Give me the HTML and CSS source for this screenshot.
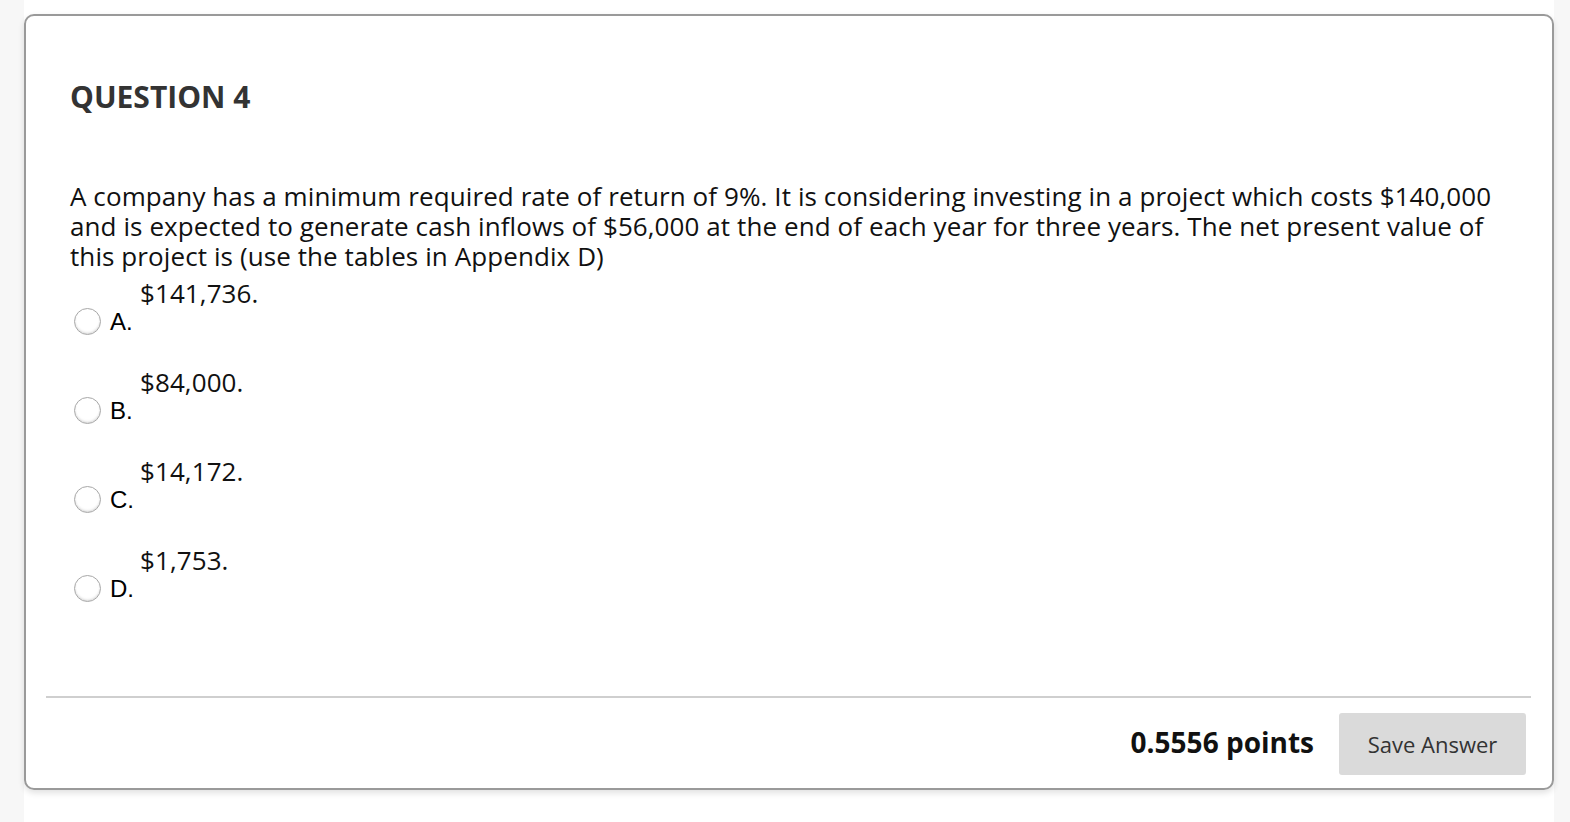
FILE: index.html
```html
<!DOCTYPE html>
<html lang="en">
<head>
  <meta charset="UTF-8">
  <title>Question 4</title>
  <link rel="stylesheet" href="styles.css">
</head>
<body>

  <div class="page">
    <div class="card">
      <h2 class="title">QUESTION 4</h2>

      <div class="question">
        A company has a minimum required rate of return of 9%. It is considering investing in a project which costs $140,000 and is expected to generate cash inflows of $56,000 at the end of each year for three years. The net present value of this project is (use the tables in Appendix D)
      </div>

      <div class="options">
        <div class="option">
          <div class="answer">$141,736.</div>
          <label class="choice"><span class="radio"></span><span class="letter">A.</span></label>
        </div>
        <div class="option">
          <div class="answer">$84,000.</div>
          <label class="choice"><span class="radio"></span><span class="letter">B.</span></label>
        </div>
        <div class="option">
          <div class="answer">$14,172.</div>
          <label class="choice"><span class="radio"></span><span class="letter">C.</span></label>
        </div>
        <div class="option">
          <div class="answer">$1,753.</div>
          <label class="choice"><span class="radio"></span><span class="letter">D.</span></label>
        </div>
      </div>

      <div class="footer">
        <span class="points">0.5556 points</span>
        <button class="save">Save Answer</button>
      </div>
    </div>
  </div>

</body>
</html>
```

FILE: styles.css
```css
body {
  margin: 0;
  background: #f7f7f7;
  font-family: "Open Sans", Arial, sans-serif;
  color: #111;
}
.page {
  margin: 0 16px 0 24px;
  background: #fff;
  min-height: 822px;
  padding-top: 14px;
  box-sizing: border-box;
}
.card {
  height: 776px;
  box-sizing: border-box;
  border: 2px solid #9a9a9a;
  border-radius: 10px;
  box-shadow: 0 3px 6px rgba(0,0,0,0.12);
  display: flex;
  flex-direction: column;
}
.title {
  margin: 61px 0 0 44px;
  font-size: 30px;
  line-height: 40px;
  font-weight: 700;
  color: #333;
}
.question {
  margin: 64px 44px 0 44px;
  font-size: 26px;
  line-height: 30px;
  letter-spacing: 0.09px;
}
.options {
  margin: 7px 0 0 44px;
}
.option {
  margin-bottom: 32px;
}
.answer {
  padding-left: 70px;
  font-size: 26px;
  line-height: 30px;
  letter-spacing: 0.09px;
}
.choice {
  display: flex;
  align-items: center;
  padding-left: 4px;
  height: 27px;
}
.radio {
  width: 25px;
  height: 25px;
  border-radius: 50%;
  border: 1px solid #a8a8a8;
  background: radial-gradient(circle at 50% 40%, #fff 55%, #ececec 100%);
  box-shadow: inset 0 -1px 2px rgba(0,0,0,0.12);
}
.letter {
  margin-left: 9px;
  font-family: "Liberation Sans", Arial, sans-serif;
  font-size: 24px;
  line-height: 27px;
  color: #000;
}
.footer {
  margin: auto 21px 0 20px;
  border-top: 2px solid #cfcfcf;
  padding: 15px 5px 13px 0;
  display: flex;
  justify-content: flex-end;
  align-items: baseline;
  gap: 25px;
}
.points {
  font-size: 28px;
  font-weight: 700;
  color: #111;
}
.save {
  width: 187px;
  height: 62px;
  border: none;
  border-radius: 3px;
  background: #dadada;
  color: #333;
  font-family: "Open Sans", Arial, sans-serif;
  font-size: 22px;
  cursor: pointer;
}
```
